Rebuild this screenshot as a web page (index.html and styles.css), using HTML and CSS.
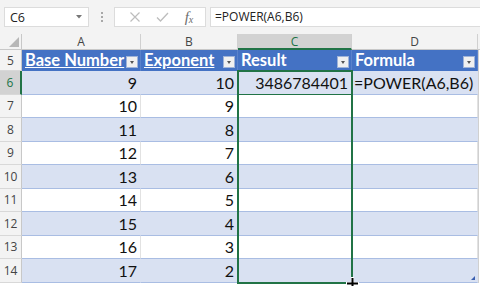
FILE: index.html
```html
<!DOCTYPE html>
<html lang="en">
<head>
    <meta charset="UTF-8">
    <title>POWER function</title>
    <link rel="stylesheet" href="styles.css">
</head>
<body>

<div class="formula-bar">
    <div class="name-box">
        <span>C6</span>
        <svg class="caret" width="6" height="4" viewBox="0 0 6 4"><path d="M0 0h6L3 3.5z" fill="#777"/></svg>
    </div>
    <div class="grip">
        <i></i><i></i><i></i>
    </div>
    <div class="fx-box">
        <svg width="12" height="12" viewBox="0 0 12 12"><path d="M1.5 1.5l9 9M10.5 1.5l-9 9" stroke="#bdbdbd" stroke-width="1.2"/></svg>
        <svg width="13" height="12" viewBox="0 0 13 12"><path d="M1 6.5l3.5 3.5L12 2" stroke="#bdbdbd" stroke-width="1.3" fill="none"/></svg>
        <span class="fx"><i>f</i><sub>x</sub></span>
    </div>
    <div class="formula-input">=POWER(A6,B6)</div>
</div>

<div class="sheet">
    <div class="corner"><svg width="10" height="10" viewBox="0 0 10 10"><path d="M10 0v10H0z" fill="#b7b7b7"/></svg></div>
    <div class="col-head">A</div>
    <div class="col-head">B</div>
    <div class="col-head active">C</div>
    <div class="col-head">D</div>
    <div class="col-head extra"></div>

    <div class="row-head">5</div>
    <div class="th u">Base Number<span class="filter"></span></div>
    <div class="th u">Exponent<span class="filter"></span></div>
    <div class="th">Result<span class="filter"></span></div>
    <div class="th">Formula<span class="filter"></span></div>
    <div class="gap"></div>

    <div class="row-head active">6</div>
    <div class="td band num">9</div>
    <div class="td band num">10</div>
    <div class="td band num current">3486784401</div>
    <div class="td band">=POWER(A6,B6)</div>
    <div class="gap"></div>

    <div class="row-head">7</div>
    <div class="td num">10</div>
    <div class="td num">9</div>
    <div class="td"></div>
    <div class="td"></div>
    <div class="gap"></div>

    <div class="row-head">8</div>
    <div class="td band num">11</div>
    <div class="td band num">8</div>
    <div class="td band"></div>
    <div class="td band"></div>
    <div class="gap"></div>

    <div class="row-head">9</div>
    <div class="td num">12</div>
    <div class="td num">7</div>
    <div class="td"></div>
    <div class="td"></div>
    <div class="gap"></div>

    <div class="row-head">10</div>
    <div class="td band num">13</div>
    <div class="td band num">6</div>
    <div class="td band"></div>
    <div class="td band"></div>
    <div class="gap"></div>

    <div class="row-head">11</div>
    <div class="td num">14</div>
    <div class="td num">5</div>
    <div class="td"></div>
    <div class="td"></div>
    <div class="gap"></div>

    <div class="row-head">12</div>
    <div class="td band num">15</div>
    <div class="td band num">4</div>
    <div class="td band"></div>
    <div class="td band"></div>
    <div class="gap"></div>

    <div class="row-head">13</div>
    <div class="td num">16</div>
    <div class="td num">3</div>
    <div class="td"></div>
    <div class="td"></div>
    <div class="gap"></div>

    <div class="row-head">14</div>
    <div class="td band num">17</div>
    <div class="td band num">2</div>
    <div class="td band"></div>
    <div class="td band last"></div>
    <div class="gap"></div>

    <div class="selection"></div>
    <svg class="cursor" width="13" height="13" viewBox="0 0 13 13">
        <path d="M5 0h3v5h5v3H8v5H5V8H0V5h5z" fill="#fff"/>
        <path d="M5.5 1h2v4.5H12v2H7.5V12h-2V7.5H1v-2h4.5z" fill="#000"/>
    </svg>
</div>

</body>
</html>
```

FILE: styles.css
```css
body {
    margin: 0;
    width: 480px;
    height: 286px;
    overflow: hidden;
    background: #fff;
    font-family: Lato, sans-serif;
}
.formula-bar {
    height: 34px;
    background: #f3f3f3;
    display: flex;
    align-items: center;
    padding-left: 4px;
    box-sizing: border-box;
}
.name-box {
    width: 85px;
    height: 20px;
    box-sizing: border-box;
    background: #fff;
    border: 1px solid #dcdcdc;
    display: flex;
    align-items: center;
    justify-content: space-between;
    padding: 0 6px 0 5px;
    font-family: "Open Sans", sans-serif;
    font-size: 12.5px;
    color: #222;
}
.grip {
    width: 25px;
    display: flex;
    flex-direction: column;
    align-items: center;
    gap: 2px;
}
.grip i {
    width: 2px;
    height: 2px;
    background: #a8a8a8;
}
.fx-box {
    width: 92px;
    height: 20px;
    box-sizing: border-box;
    background: #fff;
    border: 1px solid #dcdcdc;
    display: flex;
    align-items: center;
    justify-content: space-around;
    padding: 0 4px 0 6px;
}
.fx {
    font-family: "Liberation Serif", serif;
    color: #6d6d6d;
    font-size: 15px;
    line-height: 1;
}
.fx sub {
    font-size: 10px;
    font-style: italic;
    vertical-align: -1px;
}
.formula-input {
    flex: 1;
    height: 20px;
    margin-left: 4px;
    background: #fff;
    border: 1px solid #dcdcdc;
    border-right: none;
    box-sizing: border-box;
    font-family: "Open Sans", sans-serif;
    font-size: 12px;
    color: #222;
    line-height: 18px;
    padding-left: 4px;
}

.sheet {
    position: relative;
    display: grid;
    grid-template-columns: 22px 119px 97px 114px 126px 2px;
    grid-template-rows: 16px 21px repeat(9, 23.5px);
}
.corner {
    background: #f3f3f3;
    border-right: 1px solid #c8c8c8;
    border-bottom: 1px solid #c8c8c8;
    box-sizing: border-box;
    display: flex;
    align-items: flex-end;
    justify-content: flex-end;
    padding: 0 2px 2px 0;
}
.col-head {
    background: #f3f3f3;
    border-right: 1px solid #d0d0d0;
    border-bottom: 1px solid #c8c8c8;
    box-sizing: border-box;
    font-family: "Open Sans", sans-serif;
    font-size: 12px;
    color: #444;
    text-align: center;
    line-height: 15px;
}
.col-head.active {
    background: #d2d2d2;
    color: #217346;
    border-bottom: 2px solid #217346;
}
.col-head.extra {
    border-right: none;
}
.row-head {
    background: #f3f3f3;
    border-right: 1px solid #c8c8c8;
    border-bottom: 1px solid #d8d8d8;
    box-sizing: border-box;
    font-family: "Open Sans", sans-serif;
    font-size: 12px;
    color: #444;
    display: flex;
    align-items: center;
    justify-content: center;
}
.row-head.active {
    background: #d2d2d2;
    color: #217346;
    border-right: 2px solid #217346;
}
.th {
    background: #4472c4;
    color: #fff;
    font-weight: bold;
    font-size: 16.5px;
    display: flex;
    align-items: center;
    justify-content: space-between;
    padding: 0 2px 0 3px;
    border-right: 1px solid #5a82cb;
    box-sizing: border-box;
    line-height: 1;
}
.th.u {
    text-decoration: underline;
}
.filter {
    width: 12px;
    height: 12px;
    margin-top: 2px;
    background: #f0f0f0;
    border: 1px solid #9fb3d8;
    box-sizing: border-box;
    position: relative;
}
.filter::after {
    content: "";
    position: absolute;
    left: 3px;
    top: 4px;
    border-left: 2.5px solid transparent;
    border-right: 2.5px solid transparent;
    border-top: 3px solid #555;
}
.gap {
    background: #fff;
    border-left: 1px solid #d0d0d0;
}
.td {
    font-size: 16px;
    color: #111;
    border-bottom: 1px solid #a9bde3;
    border-right: 1px solid #e2e2e2;
    box-sizing: border-box;
    display: flex;
    align-items: center;
    padding: 0 3px 0 2px;
    white-space: nowrap;
}
.td.band {
    background: #d9e1f2;
    border-right-color: #d9e1f2;
}
.td.num {
    justify-content: flex-end;
}
.td.current {
    border-bottom: 1px solid #217346;
}
.td.last {
    position: relative;
}
.td.last::after {
    content: "";
    position: absolute;
    right: 2px;
    bottom: 2px;
    border-left: 4px solid transparent;
    border-bottom: 4px solid #3a5fb0;
}
.selection {
    position: absolute;
    left: 237px;
    top: 36px;
    width: 116px;
    height: 213.5px;
    border: 2px solid #217346;
    box-sizing: border-box;
    pointer-events: none;
}
.cursor {
    position: absolute;
    left: 346px;
    top: 243px;
}
```
